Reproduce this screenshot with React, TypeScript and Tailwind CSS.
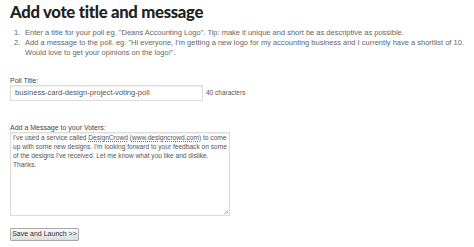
export default function App() {
  return (
    <div className="w-[474px] h-[247px] bg-white overflow-hidden font-['Liberation_Sans',Arial,sans-serif] text-[#555]">
      <div className="pl-[10px] pt-[1px]">
        <h1 className="font-['Lato',sans-serif] font-black text-[16.7px] leading-[22px] text-[#222] tracking-[-0.3px]">
          Add vote title and message
        </h1>

        <ol className="mt-[5px] text-[7.5px] leading-[10px] text-[#666] whitespace-nowrap">
          <li className="flex">
            <span className="w-[15px] shrink-0 pl-[4px]">1.</span>
            <span>Enter a title for your poll eg. "Deans Accounting Logo". Tip: make it unique and short be as descriptive as possible.</span>
          </li>
          <li className="flex">
            <span className="w-[15px] shrink-0 pl-[4px]">2.</span>
            <span>
              Add a message to the poll. eg. "Hi everyone, I'm getting a new logo for my accounting business and I currently have a shortlist of 10.
              <br />
              Would love to get your opinions on the logo!".
            </span>
          </li>
        </ol>

        <div className="mt-[18px] text-[7px] leading-[9px] text-[#444]">Poll Title:</div>
        <div className="flex items-center">
          <div className="w-[193px] h-[16px] border border-[#ddd] shadow-[inset_0_1px_2px_rgba(0,0,0,0.08)] px-[4px] flex items-center text-[7.6px] text-[#555]">
            business-card-design-project-voting-poll
          </div>
          <span className="ml-[3px] text-[6.5px] text-[#555]">40 characters</span>
        </div>

        <div className="mt-[22px] text-[7px] leading-[9px] text-[#444]">Add a Message to your Voters:</div>
        <div className="w-[220px] h-[84px] border border-[#ddd] shadow-[inset_0_1px_2px_rgba(0,0,0,0.08)] px-[2px] pt-0 text-[6.6px] leading-[9px] text-[#555] relative whitespace-nowrap">
          I've used a service called{' '}
          <span className="underline decoration-dotted decoration-[#e04040] underline-offset-1">DesignCrowd</span> (
          <span className="underline decoration-dotted decoration-[#e04040] underline-offset-1">www.designcrowd.com</span>) to come
          <br />
          up with some new designs. I'm looking forward to your feedback on some
          <br />
          of the designs I've received. Let me know what you like and dislike.
          <br />
          Thanks.
          <svg className="absolute right-[1px] bottom-[1px]" width="5" height="5" viewBox="0 0 5 5">
            <path d="M1 5 L5 1 M3 5 L5 3" stroke="#999" strokeWidth="0.7" />
          </svg>
        </div>

        <button className="mt-[12px] h-[13px] w-[69px] border border-[#aaa] rounded-[1px] bg-gradient-to-b from-[#f8f8f8] to-[#ddd] text-[7px] text-[#333] flex items-center justify-center">
          Save and Launch &gt;&gt;
        </button>
      </div>
    </div>
  );
}
